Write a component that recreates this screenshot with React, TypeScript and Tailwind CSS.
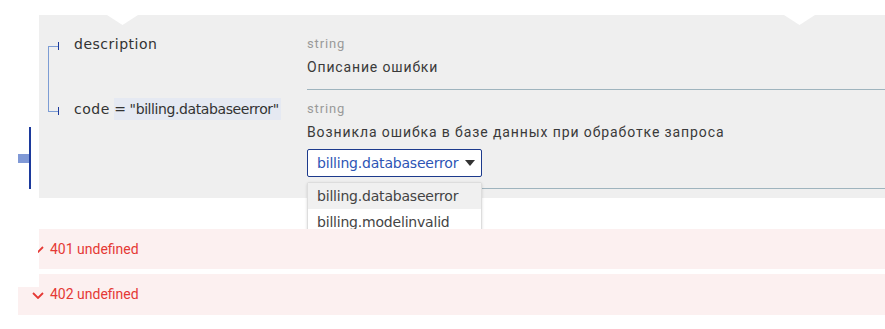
import React from 'react';

const mono = { fontFamily: '"DejaVu Sans", sans-serif' };

const Chevron: React.FC<{ className?: string }> = ({ className }) => (
  <svg width="12" height="7" viewBox="0 0 12 7" className={className}>
    <path d="M1 1 L6 6 L11 1" fill="none" stroke="#e53935" strokeWidth="1.8" />
  </svg>
);

const Notch: React.FC = () => (
  <svg width="31" height="10" viewBox="0 0 31 10" className="block">
    <path d="M0 0 L15.5 10 L31 0 Z" fill="#ffffff" />
  </svg>
);

export default function App() {
  return (
    <div className="w-[885px] h-[329px] bg-white overflow-hidden pt-[15px] font-['Roboto',sans-serif]">
      {/* parameter panel */}
      <div className="flex">
        <div className="w-[39px] shrink-0 pt-[112px]">
          <div className="flex items-center h-[62px] pl-[18px]">
            <div className="w-[11px] h-[9px] bg-[#8099d6]" />
            <div className="w-[2px] h-full bg-[#1c3a9c]" />
          </div>
        </div>
        <div className="flex-1 bg-[#efefef] h-[183px]">
          <div className="flex justify-between pl-[68px] pr-[70px]">
            <Notch />
            <Notch />
          </div>

          {/* row: description */}
          <div className="flex">
            <div className="w-[268px] shrink-0 relative pl-[35px]">
              <div className="absolute left-[9px] top-[21px] bottom-0 w-[1px] bg-[#7c9cd4]" />
              <div className="absolute left-[9px] top-[21px] w-[10px] h-[1px] bg-[#7c9cd4]" />
              <div className="absolute left-[19px] top-[17px] w-[1px] h-[8px] bg-[#1c3a9c]" />
              <div className="pt-[9px] text-[14px] leading-[20px] text-[#333] tracking-[0.5px]" style={mono}>
                description
              </div>
            </div>
            <div className="flex-1 border-b border-[#9fb4be] pt-[11px] pb-[12px] tracking-[0.85px]">
              <div className="text-[13px] leading-[16px] text-[#9a9a9a]">string</div>
              <div className="text-[14px] leading-[20px] text-[#3a3a3a] mt-[5px]">Описание ошибки</div>
            </div>
          </div>

          {/* row: code */}
          <div className="flex">
            <div className="w-[268px] shrink-0 relative pl-[35px]">
              <div className="absolute left-[9px] top-0 h-[22px] w-[1px] bg-[#7c9cd4]" />
              <div className="absolute left-[9px] top-[21px] w-[10px] h-[1px] bg-[#7c9cd4]" />
              <div className="absolute left-[19px] top-[17px] w-[1px] h-[8px] bg-[#1c3a9c]" />
              <div className="pt-[9px] text-[14px] leading-[20px] text-[#333]" style={mono}>
                <span className="tracking-[0.5px]">code</span>{' '}
                <span className="bg-[#e5e9f2] py-[3px] pr-[2px] tracking-[-0.4px]">= "billing.databaseerror"</span>
              </div>
            </div>
            <div className="flex-1 border-b border-[#9fb4be] pt-[11px] pb-[11px]">
              <div className="text-[13px] leading-[16px] text-[#9a9a9a] tracking-[0.85px]">string</div>
              <div className="text-[14px] leading-[20px] text-[#3a3a3a] mt-[5px] tracking-[0.9px]">
                Возникла ошибка в базе данных при обработке запроса
              </div>
              <div className="relative mt-[7px] w-[175px]">
                <div
                  className="h-[28px] border border-[#1c3a8c] rounded-[2px] bg-white flex items-center pl-[9px] gap-[7px] text-[14px] text-[#2d55b5] tracking-[-0.2px]"
                  style={mono}
                >
                  <span>billing.databaseerror</span>
                  <svg width="10" height="6" viewBox="0 0 10 6">
                    <path d="M0 0 L10 0 L5 6 Z" fill="#333" />
                  </svg>
                </div>
                <div
                  className="absolute left-0 top-[33px] w-[175px] h-[60px] overflow-hidden bg-white border border-[#ddd] rounded-[2px] shadow-[0_1px_3px_rgba(0,0,0,0.15)] z-10 text-[14px] text-[#444] tracking-[-0.2px]"
                  style={mono}
                >
                  <div className="h-[26px] bg-[#f0f0f0] flex items-center pl-[9px]">billing.databaseerror</div>
                  <div className="h-[26px] flex items-center pl-[9px]">billing.modelinvalid</div>
                </div>
              </div>
            </div>
          </div>
        </div>
      </div>

      {/* responses */}
      <div className="pl-[39px] mt-[31px] relative z-20">
        <div className="h-[40px] bg-[#fcf0f0] flex items-center text-[14px] text-[#e53935]">
          <div className="w-[6px] overflow-hidden -ml-[1px] mr-[6px]">
            <Chevron className="-ml-[6px]" />
          </div>
          <span>401 undefined</span>
        </div>
        <div className="relative mt-[5px] h-[41px] bg-[#fcf0f0] flex items-center text-[14px] text-[#e53935]">
          <div className="absolute left-[-21px] top-[13px] bottom-0 w-[21px] bg-[#fcf0f0]" />
          <Chevron className="relative -ml-[7px] mr-[6px] mt-[1px]" />
          <span>402 undefined</span>
        </div>
      </div>
    </div>
  );
}
